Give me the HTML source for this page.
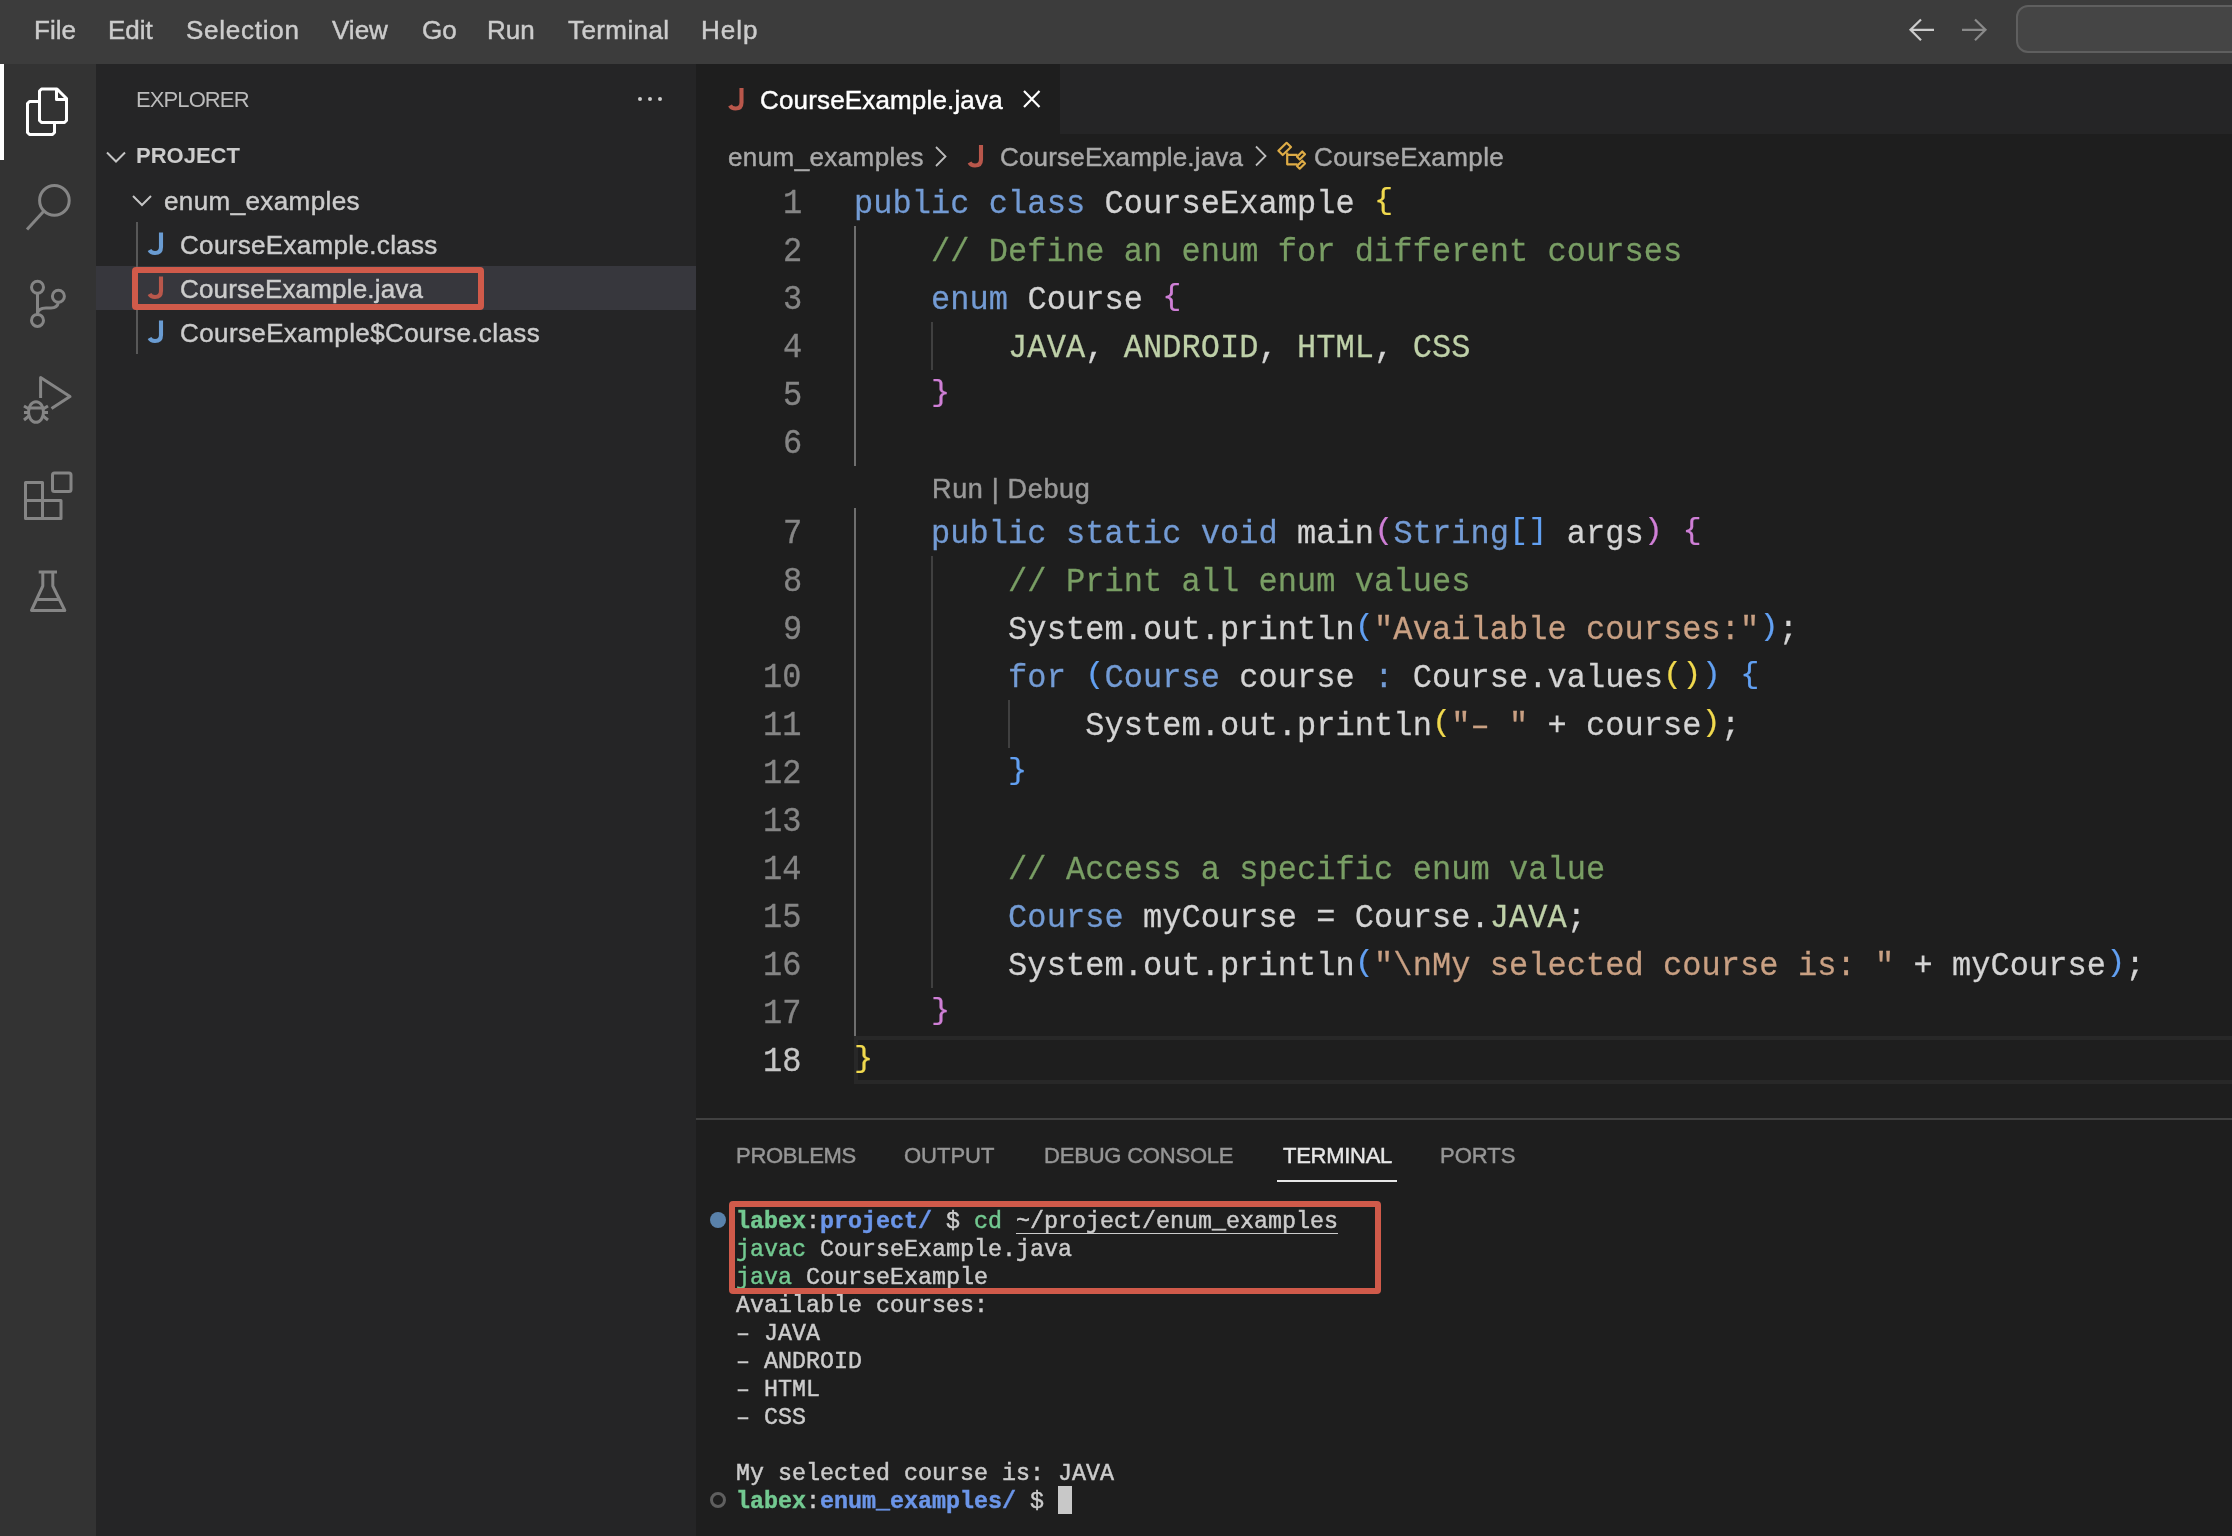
<!DOCTYPE html>
<html><head><meta charset="utf-8"><style>
html,body{margin:0;padding:0;width:2232px;height:1536px;overflow:hidden;background:#1e1e1e;}
body>div,body>svg{position:absolute;}
.t{will-change:transform;-webkit-text-stroke:0.45px currentColor;}
.br{font-weight:400;display:inline-block;transform:translateY(-3.9px) scaleY(0.894);transform-origin:50% 24.5px;}
.code{transform:scaleY(1.06);transform-origin:0 24.5px;-webkit-text-stroke:0.25px currentColor;}
.t{white-space:pre;}
</style></head><body>
<div style="left:0px;top:0px;width:2232px;height:64px;background:#3c3c3c;"></div>
<div style="left:0px;top:64px;width:96px;height:1472px;background:#333333;"></div>
<div style="left:96px;top:64px;width:600px;height:1472px;background:#252526;"></div>
<div style="left:696px;top:64px;width:1536px;height:70px;background:#252526;"></div>
<div style="left:696px;top:64px;width:364px;height:70px;background:#1e1e1e;"></div>
<div style="left:0px;top:64px;width:4px;height:96px;background:#ffffff;"></div>
<div class="t" style="left:33.5px;top:17.19px;font-size:26px;line-height:26px;color:#cccccc;font-weight:400;font-family:'Liberation Sans', sans-serif;letter-spacing:0px;">File</div>
<div class="t" style="left:107.8px;top:17.19px;font-size:26px;line-height:26px;color:#cccccc;font-weight:400;font-family:'Liberation Sans', sans-serif;letter-spacing:0px;">Edit</div>
<div class="t" style="left:185.7px;top:17.19px;font-size:26px;line-height:26px;color:#cccccc;font-weight:400;font-family:'Liberation Sans', sans-serif;letter-spacing:0.75px;">Selection</div>
<div class="t" style="left:332.4px;top:17.19px;font-size:26px;line-height:26px;color:#cccccc;font-weight:400;font-family:'Liberation Sans', sans-serif;letter-spacing:0px;">View</div>
<div class="t" style="left:421.6px;top:17.19px;font-size:26px;line-height:26px;color:#cccccc;font-weight:400;font-family:'Liberation Sans', sans-serif;letter-spacing:0px;">Go</div>
<div class="t" style="left:487.4px;top:17.19px;font-size:26px;line-height:26px;color:#cccccc;font-weight:400;font-family:'Liberation Sans', sans-serif;letter-spacing:0px;">Run</div>
<div class="t" style="left:568.4px;top:17.19px;font-size:26px;line-height:26px;color:#cccccc;font-weight:400;font-family:'Liberation Sans', sans-serif;letter-spacing:0.4px;">Terminal</div>
<div class="t" style="left:701.3px;top:17.19px;font-size:26px;line-height:26px;color:#cccccc;font-weight:400;font-family:'Liberation Sans', sans-serif;letter-spacing:1px;">Help</div>
<div style="left:2016px;top:5px;width:260px;height:48px;background:#454545;border:2px solid #5f5f5f;border-radius:12px;box-sizing:border-box"></div>
<svg style="left:1900px;top:10px" width="100" height="40" viewBox="1900 10 100 40">
<path d="M1934 29.8 H1911 M1921 19.5 L1910.5 29.8 L1921 40.2" stroke="#cccccc" stroke-width="2.2" fill="none"/>
<path d="M1962 29.8 H1985 M1975 19.5 L1985.5 29.8 L1975 40.2" stroke="#8a8a8a" stroke-width="2.2" fill="none"/>
</svg>
<svg style="left:0;top:64px" width="96" height="600" viewBox="0 64 96 600">
<g fill="none" stroke="#ffffff" stroke-width="3" stroke-linejoin="round">
<path d="M39.5 101.5 H29.5 L27.5 103.5 V132.5 L29.5 134.5 H52.5 L54.5 132.5 V122.5"/>
<path d="M41.5 89 H57 L66.5 98.5 V120.5 L64.5 122.5 H41.5 L39.5 120.5 V91 Z"/>
<path d="M56.5 89 V99.5 H66.5"/>
</g>
<g fill="none" stroke="#858585" stroke-width="3" stroke-linejoin="round">
<circle cx="54.4" cy="200.4" r="14.8"/>
<path d="M43.5 211.5 L27 229.5"/>
<circle cx="37.5" cy="287.3" r="6"/>
<circle cx="37.5" cy="320.4" r="6"/>
<circle cx="58.4" cy="296.3" r="6"/>
<path d="M37.5 293.3 V314.4"/>
<path d="M37.5 314 Q38 308 46 308 H51 Q57.5 308 58.4 302.3"/>
<path d="M40.6 398 V377.5 L70 396.6 L51.5 408.5"/>
<ellipse cx="36" cy="412" rx="7.5" ry="10.3"/>
<path d="M28.5 408 H43.5 M24 406 L29 409 M48 406 L43 409 M24 412.5 H28.5 M43.5 412.5 H48 M24 420 L29 416 M48 420 L43 416"/>
<path d="M25.5 482.5 H42.5 V518.5 H25.5 Z M25.5 500.5 H61 V518.5 H42.5"/>
<rect x="52.5" y="473" width="18.5" height="18.5" rx="2"/>
<path d="M38.7 572 H57 M42.8 572 V586 L31.5 610.5 H64.8 L52.8 586 V572 M36 599.4 H59.8"/>
</g>
</svg>
<div class="t" style="left:136px;top:88.67px;font-size:22px;line-height:22px;color:#bbbbbb;font-weight:400;font-family:'Liberation Sans', sans-serif;letter-spacing:-0.9px;-webkit-text-stroke:0">EXPLORER</div>
<div style="left:637.5px;top:96.5px;width:4px;height:4px;border-radius:2px;background:#cccccc"></div>
<div style="left:648px;top:96.5px;width:4px;height:4px;border-radius:2px;background:#cccccc"></div>
<div style="left:658px;top:96.5px;width:4px;height:4px;border-radius:2px;background:#cccccc"></div>
<div class="t" style="left:136px;top:145.37px;font-size:22px;line-height:22px;color:#cccccc;font-weight:700;font-family:'Liberation Sans', sans-serif;letter-spacing:0px;-webkit-text-stroke:0">PROJECT</div>
<div style="left:96px;top:266px;width:600px;height:44px;background:#37373d;"></div>
<div style="left:136px;top:222px;width:2px;height:132px;background:#585858;"></div>
<div class="t" style="left:163.8px;top:187.79px;font-size:26px;line-height:26px;color:#cccccc;font-weight:400;font-family:'Liberation Sans', sans-serif;letter-spacing:0.4px;">enum_examples</div>
<svg style="left:96px;top:140px" width="80" height="80" viewBox="96 140 80 80"><path d="M107 152.5 L116 161.5 L125 152.5 M133 196 L142 205 L151 196" stroke="#c5c5c5" stroke-width="2" fill="none"/></svg>
<svg style="left:96px;top:200px" width="600" height="200" viewBox="96 200 600 200"><path d="M161.0 232.5 V247.0 Q161.0 253.0 155.0 253.0 Q151.0 253.0 149.5 250.0" stroke="#6a9cd2" stroke-width="4.1" fill="none"/><path d="M161.0 276.5 V291.0 Q161.0 297.0 155.0 297.0 Q151.0 297.0 149.5 294.0" stroke="#b9574b" stroke-width="4.1" fill="none"/><path d="M161.0 320.5 V335.0 Q161.0 341.0 155.0 341.0 Q151.0 341.0 149.5 338.0" stroke="#6a9cd2" stroke-width="4.1" fill="none"/></svg>
<div class="t" style="left:180.2px;top:232.49px;font-size:26px;line-height:26px;color:#cccccc;font-weight:400;font-family:'Liberation Sans', sans-serif;letter-spacing:0.33px;">CourseExample.class</div>
<div class="t" style="left:180.2px;top:276.49px;font-size:26px;line-height:26px;color:#cccccc;font-weight:400;font-family:'Liberation Sans', sans-serif;letter-spacing:0.18px;">CourseExample.java</div>
<div class="t" style="left:180.2px;top:320.49px;font-size:26px;line-height:26px;color:#cccccc;font-weight:400;font-family:'Liberation Sans', sans-serif;letter-spacing:0.4px;">CourseExample$Course.class</div>
<div style="left:132px;top:267px;width:352px;height:43px;border:6px solid #d05a4a;border-radius:4px;box-sizing:border-box"></div>
<svg style="left:696px;top:64px" width="700" height="120" viewBox="696 64 700 120"><path d="M741.5 88 V102.5 Q741.5 108.5 735.5 108.5 Q731.5 108.5 730 105.5" stroke="#b9574b" stroke-width="4.1" fill="none"/><path d="M981.0 145 V159.5 Q981.0 165.5 975.0 165.5 Q971.0 165.5 969.5 162.5" stroke="#b9574b" stroke-width="4.1" fill="none"/><path d="M1024 91 L1039.5 107 M1039.5 91 L1024 107" stroke="#ffffff" stroke-width="2.2" fill="none"/><path d="M936 147 L945.5 156.5 L936 166 M1256 146.5 L1265.5 156 L1256 165.5" stroke="#bdbdbd" stroke-width="1.8" fill="none"/><g stroke="#deac46" stroke-width="2.2" fill="none" stroke-linejoin="round"><path d="M1286.6 142.8 L1291 147 L1282.7 155 L1278.4 150.8 Z"/><path d="M1287.2 152.5 V164.3 H1297.5 M1287.2 154.8 H1297.5"/><path d="M1302.3 151.5 L1305 154.3 L1299.7 159.5 L1297 156.8 Z"/><path d="M1302.3 160.7 L1305 163.5 L1299.7 168.7 L1297 166 Z"/></g></svg>
<div class="t" style="left:759.5px;top:86.79px;font-size:26px;line-height:26px;color:#ffffff;font-weight:400;font-family:'Liberation Sans', sans-serif;letter-spacing:0.16px;">CourseExample.java</div>
<div class="t" style="left:728px;top:143.79px;font-size:26px;line-height:26px;color:#a9a9a9;font-weight:400;font-family:'Liberation Sans', sans-serif;letter-spacing:0.4px;">enum_examples</div>
<div class="t" style="left:999.5px;top:143.79px;font-size:26px;line-height:26px;color:#a9a9a9;font-weight:400;font-family:'Liberation Sans', sans-serif;letter-spacing:0.18px;">CourseExample.java</div>
<div class="t" style="left:1313.5px;top:143.79px;font-size:26px;line-height:26px;color:#a9a9a9;font-weight:400;font-family:'Liberation Sans', sans-serif;letter-spacing:0.4px;">CourseExample</div>
<div style="left:854px;top:1036px;width:1378px;height:48px;border:4px solid #282828;border-right:none;box-sizing:border-box"></div>
<div style="left:854px;top:226px;width:2px;height:240px;background:#6e6e6e;"></div>
<div style="left:854px;top:508px;width:2px;height:528px;background:#6e6e6e;"></div>
<div style="left:931px;top:322px;width:2px;height:48px;background:#404040;"></div>
<div style="left:931px;top:556px;width:2px;height:432px;background:#404040;"></div>
<div style="left:1008px;top:700px;width:2px;height:48px;background:#404040;"></div>
<div class="t" style="left:782.74px;top:189.18px;font-size:32px;line-height:32px;color:#858585;font-weight:400;font-family:'Liberation Mono', monospace;letter-spacing:0.06px;transform:scaleY(1.08);transform-origin:0 24.5px;-webkit-text-stroke:0.3px currentColor">1</div>
<div class="t code" style="left:854px;top:189.18px;font-size:32px;line-height:32px;font-family:'Liberation Mono', monospace;letter-spacing:0.06px"><span style="color:#739bd4">public class </span><span style="color:#d4d4d4">CourseExample </span><span style="color:#f0d94e"><b class="br">{</b></span></div>
<div class="t" style="left:782.74px;top:237.18px;font-size:32px;line-height:32px;color:#858585;font-weight:400;font-family:'Liberation Mono', monospace;letter-spacing:0.06px;transform:scaleY(1.08);transform-origin:0 24.5px;-webkit-text-stroke:0.3px currentColor">2</div>
<div class="t code" style="left:854px;top:237.18px;font-size:32px;line-height:32px;font-family:'Liberation Mono', monospace;letter-spacing:0.06px"><span style="color:#799e64">    // Define an enum for different courses</span></div>
<div class="t" style="left:782.74px;top:285.18px;font-size:32px;line-height:32px;color:#858585;font-weight:400;font-family:'Liberation Mono', monospace;letter-spacing:0.06px;transform:scaleY(1.08);transform-origin:0 24.5px;-webkit-text-stroke:0.3px currentColor">3</div>
<div class="t code" style="left:854px;top:285.18px;font-size:32px;line-height:32px;font-family:'Liberation Mono', monospace;letter-spacing:0.06px"><span style="color:#739bd4">    enum </span><span style="color:#d4d4d4">Course </span><span style="color:#cf7fd6"><b class="br">{</b></span></div>
<div class="t" style="left:782.74px;top:333.18px;font-size:32px;line-height:32px;color:#858585;font-weight:400;font-family:'Liberation Mono', monospace;letter-spacing:0.06px;transform:scaleY(1.08);transform-origin:0 24.5px;-webkit-text-stroke:0.3px currentColor">4</div>
<div class="t code" style="left:854px;top:333.18px;font-size:32px;line-height:32px;font-family:'Liberation Mono', monospace;letter-spacing:0.06px"><span style="color:#bed0a8">        JAVA</span><span style="color:#d4d4d4">, </span><span style="color:#bed0a8">ANDROID</span><span style="color:#d4d4d4">, </span><span style="color:#bed0a8">HTML</span><span style="color:#d4d4d4">, </span><span style="color:#bed0a8">CSS</span></div>
<div class="t" style="left:782.74px;top:381.18px;font-size:32px;line-height:32px;color:#858585;font-weight:400;font-family:'Liberation Mono', monospace;letter-spacing:0.06px;transform:scaleY(1.08);transform-origin:0 24.5px;-webkit-text-stroke:0.3px currentColor">5</div>
<div class="t code" style="left:854px;top:381.18px;font-size:32px;line-height:32px;font-family:'Liberation Mono', monospace;letter-spacing:0.06px"><span style="color:#cf7fd6">    <b class="br">}</b></span></div>
<div class="t" style="left:782.74px;top:429.18px;font-size:32px;line-height:32px;color:#858585;font-weight:400;font-family:'Liberation Mono', monospace;letter-spacing:0.06px;transform:scaleY(1.08);transform-origin:0 24.5px;-webkit-text-stroke:0.3px currentColor">6</div>
<div class="t" style="left:782.74px;top:519.18px;font-size:32px;line-height:32px;color:#858585;font-weight:400;font-family:'Liberation Mono', monospace;letter-spacing:0.06px;transform:scaleY(1.08);transform-origin:0 24.5px;-webkit-text-stroke:0.3px currentColor">7</div>
<div class="t code" style="left:854px;top:519.18px;font-size:32px;line-height:32px;font-family:'Liberation Mono', monospace;letter-spacing:0.06px"><span style="color:#739bd4">    public static void </span><span style="color:#d4d4d4">main</span><span style="color:#cf7fd6"><b class="br">(</b></span><span style="color:#739bd4">String</span><span style="color:#62a0f2"><b class="br">[</b><b class="br">]</b></span><span style="color:#d4d4d4"> args</span><span style="color:#cf7fd6"><b class="br">)</b></span><span style="color:#d4d4d4"> </span><span style="color:#cf7fd6"><b class="br">{</b></span></div>
<div class="t" style="left:782.74px;top:567.18px;font-size:32px;line-height:32px;color:#858585;font-weight:400;font-family:'Liberation Mono', monospace;letter-spacing:0.06px;transform:scaleY(1.08);transform-origin:0 24.5px;-webkit-text-stroke:0.3px currentColor">8</div>
<div class="t code" style="left:854px;top:567.18px;font-size:32px;line-height:32px;font-family:'Liberation Mono', monospace;letter-spacing:0.06px"><span style="color:#799e64">        // Print all enum values</span></div>
<div class="t" style="left:782.74px;top:615.18px;font-size:32px;line-height:32px;color:#858585;font-weight:400;font-family:'Liberation Mono', monospace;letter-spacing:0.06px;transform:scaleY(1.08);transform-origin:0 24.5px;-webkit-text-stroke:0.3px currentColor">9</div>
<div class="t code" style="left:854px;top:615.18px;font-size:32px;line-height:32px;font-family:'Liberation Mono', monospace;letter-spacing:0.06px"><span style="color:#d4d4d4">        System.out.println</span><span style="color:#62a0f2"><b class="br">(</b></span><span style="color:#c9a083">&quot;Available courses:&quot;</span><span style="color:#62a0f2"><b class="br">)</b></span><span style="color:#d4d4d4">;</span></div>
<div class="t" style="left:763.48px;top:663.18px;font-size:32px;line-height:32px;color:#858585;font-weight:400;font-family:'Liberation Mono', monospace;letter-spacing:0.06px;transform:scaleY(1.08);transform-origin:0 24.5px;-webkit-text-stroke:0.3px currentColor">10</div>
<div class="t code" style="left:854px;top:663.18px;font-size:32px;line-height:32px;font-family:'Liberation Mono', monospace;letter-spacing:0.06px"><span style="color:#739bd4">        for </span><span style="color:#62a0f2"><b class="br">(</b></span><span style="color:#739bd4">Course</span><span style="color:#d4d4d4"> course </span><span style="color:#739bd4">:</span><span style="color:#d4d4d4"> Course.values</span><span style="color:#f0d94e"><b class="br">(</b><b class="br">)</b></span><span style="color:#62a0f2"><b class="br">)</b></span><span style="color:#d4d4d4"> </span><span style="color:#62a0f2"><b class="br">{</b></span></div>
<div class="t" style="left:763.48px;top:711.18px;font-size:32px;line-height:32px;color:#858585;font-weight:400;font-family:'Liberation Mono', monospace;letter-spacing:0.06px;transform:scaleY(1.08);transform-origin:0 24.5px;-webkit-text-stroke:0.3px currentColor">11</div>
<div class="t code" style="left:854px;top:711.18px;font-size:32px;line-height:32px;font-family:'Liberation Mono', monospace;letter-spacing:0.06px"><span style="color:#d4d4d4">            System.out.println</span><span style="color:#f0d94e"><b class="br">(</b></span><span style="color:#c9a083">&quot;– &quot;</span><span style="color:#d4d4d4"> + course</span><span style="color:#f0d94e"><b class="br">)</b></span><span style="color:#d4d4d4">;</span></div>
<div class="t" style="left:763.48px;top:759.18px;font-size:32px;line-height:32px;color:#858585;font-weight:400;font-family:'Liberation Mono', monospace;letter-spacing:0.06px;transform:scaleY(1.08);transform-origin:0 24.5px;-webkit-text-stroke:0.3px currentColor">12</div>
<div class="t code" style="left:854px;top:759.18px;font-size:32px;line-height:32px;font-family:'Liberation Mono', monospace;letter-spacing:0.06px"><span style="color:#62a0f2">        <b class="br">}</b></span></div>
<div class="t" style="left:763.48px;top:807.18px;font-size:32px;line-height:32px;color:#858585;font-weight:400;font-family:'Liberation Mono', monospace;letter-spacing:0.06px;transform:scaleY(1.08);transform-origin:0 24.5px;-webkit-text-stroke:0.3px currentColor">13</div>
<div class="t" style="left:763.48px;top:855.18px;font-size:32px;line-height:32px;color:#858585;font-weight:400;font-family:'Liberation Mono', monospace;letter-spacing:0.06px;transform:scaleY(1.08);transform-origin:0 24.5px;-webkit-text-stroke:0.3px currentColor">14</div>
<div class="t code" style="left:854px;top:855.18px;font-size:32px;line-height:32px;font-family:'Liberation Mono', monospace;letter-spacing:0.06px"><span style="color:#799e64">        // Access a specific enum value</span></div>
<div class="t" style="left:763.48px;top:903.18px;font-size:32px;line-height:32px;color:#858585;font-weight:400;font-family:'Liberation Mono', monospace;letter-spacing:0.06px;transform:scaleY(1.08);transform-origin:0 24.5px;-webkit-text-stroke:0.3px currentColor">15</div>
<div class="t code" style="left:854px;top:903.18px;font-size:32px;line-height:32px;font-family:'Liberation Mono', monospace;letter-spacing:0.06px"><span style="color:#739bd4">        Course</span><span style="color:#d4d4d4"> myCourse = Course.</span><span style="color:#bed0a8">JAVA</span><span style="color:#d4d4d4">;</span></div>
<div class="t" style="left:763.48px;top:951.18px;font-size:32px;line-height:32px;color:#858585;font-weight:400;font-family:'Liberation Mono', monospace;letter-spacing:0.06px;transform:scaleY(1.08);transform-origin:0 24.5px;-webkit-text-stroke:0.3px currentColor">16</div>
<div class="t code" style="left:854px;top:951.18px;font-size:32px;line-height:32px;font-family:'Liberation Mono', monospace;letter-spacing:0.06px"><span style="color:#d4d4d4">        System.out.println</span><span style="color:#62a0f2"><b class="br">(</b></span><span style="color:#c9a083">&quot;\nMy selected course is: &quot;</span><span style="color:#d4d4d4"> + myCourse</span><span style="color:#62a0f2"><b class="br">)</b></span><span style="color:#d4d4d4">;</span></div>
<div class="t" style="left:763.48px;top:999.18px;font-size:32px;line-height:32px;color:#858585;font-weight:400;font-family:'Liberation Mono', monospace;letter-spacing:0.06px;transform:scaleY(1.08);transform-origin:0 24.5px;-webkit-text-stroke:0.3px currentColor">17</div>
<div class="t code" style="left:854px;top:999.18px;font-size:32px;line-height:32px;font-family:'Liberation Mono', monospace;letter-spacing:0.06px"><span style="color:#cf7fd6">    <b class="br">}</b></span></div>
<div class="t" style="left:763.48px;top:1047.18px;font-size:32px;line-height:32px;color:#c6c6c6;font-weight:400;font-family:'Liberation Mono', monospace;letter-spacing:0.06px;transform:scaleY(1.08);transform-origin:0 24.5px;-webkit-text-stroke:0.3px currentColor">18</div>
<div class="t code" style="left:854px;top:1047.18px;font-size:32px;line-height:32px;font-family:'Liberation Mono', monospace;letter-spacing:0.06px"><span style="color:#f0d94e"><b class="br">}</b></span></div>
<div class="t" style="left:931.5px;top:475.74px;font-size:27px;line-height:27px;color:#999999;font-weight:400;font-family:'Liberation Sans', sans-serif;letter-spacing:0.67px;">Run | Debug</div>
<div style="left:696px;top:1118px;width:1536px;height:2px;background:#414141;"></div>
<div class="t" style="left:735.5px;top:1144.57px;font-size:22px;line-height:22px;color:#969696;font-weight:400;font-family:'Liberation Sans', sans-serif;letter-spacing:-0.28px;">PROBLEMS</div>
<div class="t" style="left:903.9px;top:1144.57px;font-size:22px;line-height:22px;color:#969696;font-weight:400;font-family:'Liberation Sans', sans-serif;letter-spacing:0px;">OUTPUT</div>
<div class="t" style="left:1043.5px;top:1144.57px;font-size:22px;line-height:22px;color:#969696;font-weight:400;font-family:'Liberation Sans', sans-serif;letter-spacing:-0.2px;">DEBUG CONSOLE</div>
<div class="t" style="left:1282.5px;top:1144.57px;font-size:22px;line-height:22px;color:#e7e7e7;font-weight:400;font-family:'Liberation Sans', sans-serif;letter-spacing:-0.28px;">TERMINAL</div>
<div class="t" style="left:1439.7px;top:1144.57px;font-size:22px;line-height:22px;color:#969696;font-weight:400;font-family:'Liberation Sans', sans-serif;letter-spacing:0px;">PORTS</div>
<div style="left:1277px;top:1179.5px;width:120px;height:2.2px;background:#e7e7e7;"></div>
<div class="t" style="left:736px;top:1210.82px;font-size:23.333px;line-height:23.333px;font-family:'Liberation Mono', monospace"><span style="color:#73c991;font-weight:700">labex</span><span style="color:#cccccc;font-weight:400">:</span><span style="color:#6b95e8;font-weight:700">project/</span><span style="color:#cccccc;font-weight:400"> $ </span><span style="color:#73c991;font-weight:400">cd</span><span style="color:#cccccc;font-weight:400"> </span><span style="color:#cccccc;font-weight:400;text-decoration:underline;text-underline-offset:5px;text-decoration-thickness:1.4px">~/project/enum_examples</span></div>
<div class="t" style="left:736px;top:1238.82px;font-size:23.333px;line-height:23.333px;font-family:'Liberation Mono', monospace"><span style="color:#73c991;font-weight:400">javac</span><span style="color:#cccccc;font-weight:400"> CourseExample.java</span></div>
<div class="t" style="left:736px;top:1266.82px;font-size:23.333px;line-height:23.333px;font-family:'Liberation Mono', monospace"><span style="color:#73c991;font-weight:400">java</span><span style="color:#cccccc;font-weight:400"> CourseExample</span></div>
<div class="t" style="left:736px;top:1294.82px;font-size:23.333px;line-height:23.333px;font-family:'Liberation Mono', monospace"><span style="color:#cccccc;font-weight:400">Available courses:</span></div>
<div class="t" style="left:736px;top:1322.82px;font-size:23.333px;line-height:23.333px;font-family:'Liberation Mono', monospace"><span style="color:#cccccc;font-weight:400">– JAVA</span></div>
<div class="t" style="left:736px;top:1350.82px;font-size:23.333px;line-height:23.333px;font-family:'Liberation Mono', monospace"><span style="color:#cccccc;font-weight:400">– ANDROID</span></div>
<div class="t" style="left:736px;top:1378.82px;font-size:23.333px;line-height:23.333px;font-family:'Liberation Mono', monospace"><span style="color:#cccccc;font-weight:400">– HTML</span></div>
<div class="t" style="left:736px;top:1406.82px;font-size:23.333px;line-height:23.333px;font-family:'Liberation Mono', monospace"><span style="color:#cccccc;font-weight:400">– CSS</span></div>
<div class="t" style="left:736px;top:1462.82px;font-size:23.333px;line-height:23.333px;font-family:'Liberation Mono', monospace"><span style="color:#cccccc;font-weight:400">My selected course is: JAVA</span></div>
<div class="t" style="left:736px;top:1490.82px;font-size:23.333px;line-height:23.333px;font-family:'Liberation Mono', monospace"><span style="color:#73c991;font-weight:700">labex</span><span style="color:#cccccc;font-weight:400">:</span><span style="color:#6b95e8;font-weight:700">enum_examples/</span><span style="color:#cccccc;font-weight:400"> $ </span></div>
<div style="left:1058px;top:1486px;width:14px;height:28px;background:#c8c8c8;"></div>
<div style="left:729px;top:1201px;width:652px;height:93px;border:6px solid #d05a4a;border-radius:4px;box-sizing:border-box"></div>
<div style="left:710px;top:1212px;width:16px;height:16px;border-radius:8px;background:#5a82ab"></div>
<div style="left:710px;top:1492px;width:16px;height:16px;border-radius:8px;border:3px solid #5f5f5f;box-sizing:border-box"></div>
</body></html>
